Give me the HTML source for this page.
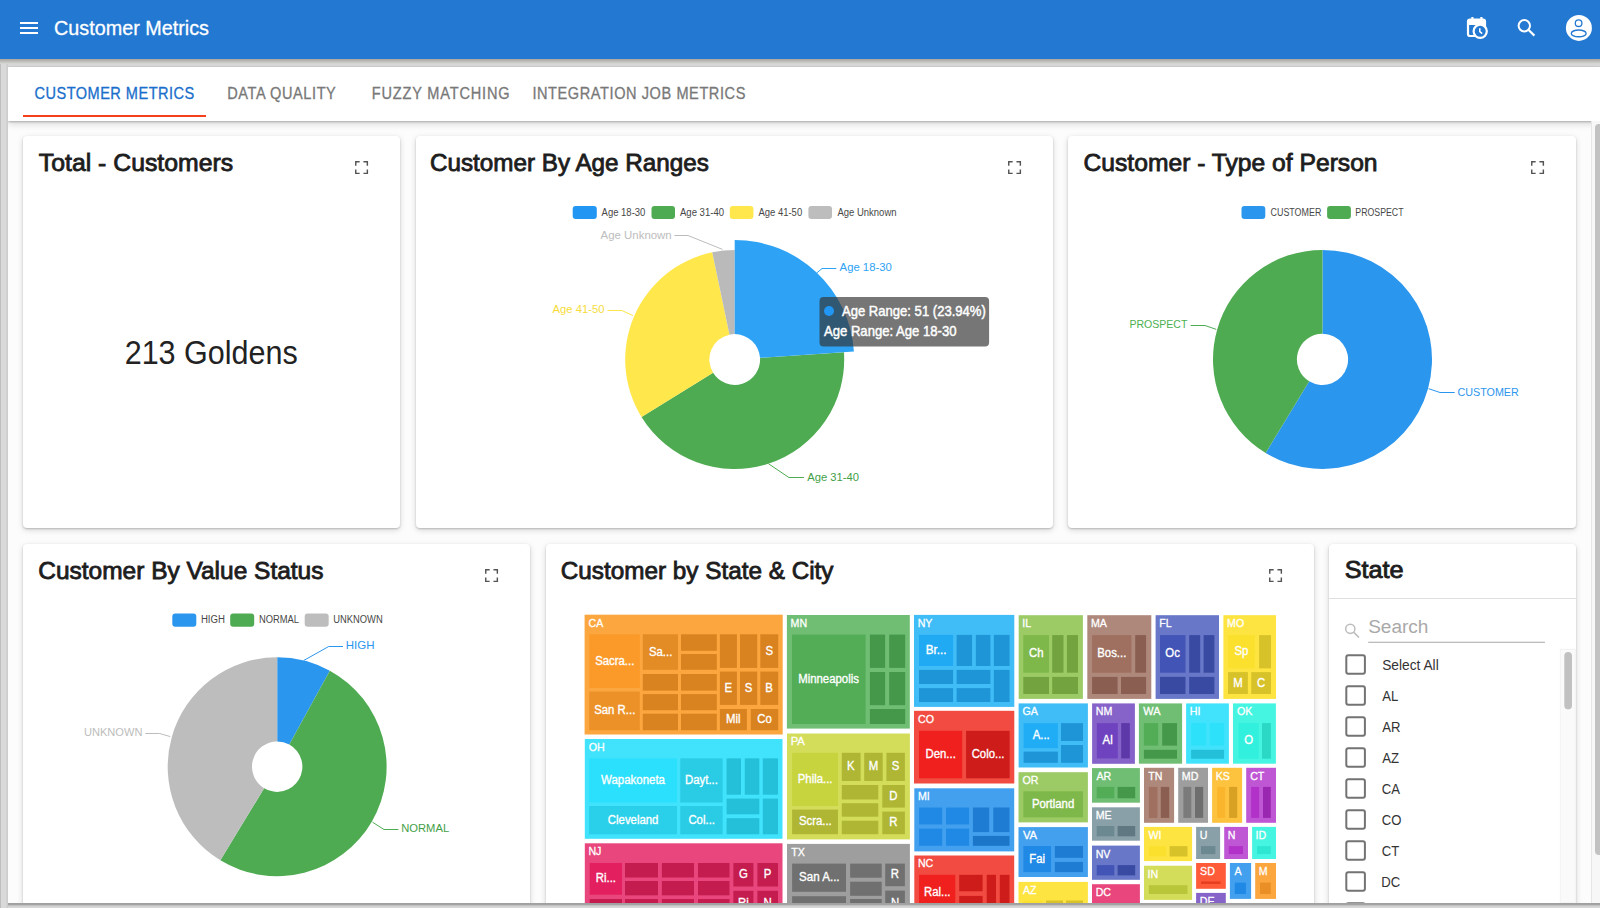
<!DOCTYPE html>
<html><head><meta charset="utf-8"><style>
html,body{margin:0;padding:0;width:1600px;height:908px;overflow:hidden;background:#d9d9d9;font-family:"Liberation Sans",sans-serif;position:relative}
.card{position:absolute;background:#fff;border-radius:4px;box-shadow:0 1px 2px rgba(0,0,0,.2),0 2px 6px rgba(0,0,0,.15)}
svg{position:absolute;left:0;top:0}
</style></head><body>
<div style="position:absolute;left:0;top:59px;width:1px;height:849px;background:#bfbfbf"></div>
<div style="position:absolute;left:0;top:0;width:1600px;height:59px;background:#2378d1;"></div>
<div style="position:absolute;left:0;top:59px;width:1600px;height:5px;background:linear-gradient(#a9a49c,#d9d9d9)"></div>
<div style="position:absolute;left:8px;top:67px;width:1600px;height:836px;background:#fcfcfc;box-shadow:-1px 1px 2px rgba(0,0,0,0.35)"></div>
<div style="position:absolute;left:8px;top:67px;width:1592px;height:54px;background:#fff;box-shadow:0 1px 2px rgba(0,0,0,0.25), 0 3px 7px rgba(0,0,0,0.14)"></div>
<div style="position:absolute;left:1591px;top:121px;width:9px;height:782px;background:#f7f7f7;border-left:1px solid #e6e6e6;box-sizing:border-box"></div>
<div style="position:absolute;left:1595px;top:124px;width:8px;height:731px;background:#c2c2c2;border-radius:4px"></div>
<div class="card" style="left:23px;top:136px;width:377px;height:392px"></div>
<div class="card" style="left:416px;top:136px;width:637px;height:392px"></div>
<div class="card" style="left:1068px;top:136px;width:508px;height:392px"></div>
<div class="card" style="left:546px;top:544px;width:768px;height:396px"></div>
<div class="card" style="left:23px;top:544px;width:507px;height:396px"></div>
<div class="card" style="left:1329px;top:544px;width:247px;height:396px"></div>
<svg width="1600" height="908" viewBox="0 0 1600 908" font-family="Liberation Sans, sans-serif">
<rect x="20.00" y="22.00" width="18.00" height="2.00" fill="#fff" />
<rect x="20.00" y="27.00" width="18.00" height="2.00" fill="#fff" />
<rect x="20.00" y="32.00" width="18.00" height="2.00" fill="#fff" />
<text x="54.00" y="35.00" font-size="20.93" fill="#fff" stroke="#fff" stroke-width="0.30" textLength="155.02" lengthAdjust="spacingAndGlyphs" >Customer Metrics</text>
<text transform="translate(35.25 98.60) scale(0.9200 1)" x="-0.80" y="0" font-size="15.84" fill="#196ecb" letter-spacing="0.516" stroke="#196ecb" stroke-width="0.30" >CUSTOMER METRICS</text>
<text transform="translate(228.40 98.60) scale(0.9200 1)" x="-1.30" y="0" font-size="15.84" fill="#787878" letter-spacing="0.635" stroke="#787878" stroke-width="0.30" >DATA QUALITY</text>
<text transform="translate(373.00 98.60) scale(0.9200 1)" x="-1.30" y="0" font-size="15.84" fill="#787878" letter-spacing="0.882" stroke="#787878" stroke-width="0.30" >FUZZY MATCHING</text>
<text transform="translate(533.75 98.60) scale(0.9200 1)" x="-1.46" y="0" font-size="15.84" fill="#787878" letter-spacing="0.624" stroke="#787878" stroke-width="0.30" >INTEGRATION JOB METRICS</text>
<rect x="23.00" y="115.00" width="183.00" height="2.00" fill="#f5401f" />
<path d="M1468 21.5 a2 2 0 0 1 2 -2 h13 a2 2 0 0 1 2 2 v8 M1476 36 h-6 a2 2 0 0 1 -2 -2 v-12.5" fill="none" stroke="#fff" stroke-width="2.2" />
<rect x="1468.00" y="20.00" width="17.00" height="5.00" fill="#fff" />
<rect x="1471.30" y="17.00" width="2.20" height="4.00" fill="#fff" />
<rect x="1480.30" y="17.00" width="2.20" height="4.00" fill="#fff" />
<circle cx="1480.2" cy="31.3" r="6.6" fill="#2378d1" stroke="#fff" stroke-width="2.2"/>
<path d="M1479.8 28.3 v3.4 l2.4 2.0" fill="none" stroke="#fff" stroke-width="1.5" />
<circle cx="1524.3" cy="25.7" r="5.7" fill="none" stroke="#fff" stroke-width="2"/>
<path d="M1528.4 29.8 L1534.4 35.6" fill="none" stroke="#fff" stroke-width="2.2" />
<circle cx="1578.9" cy="27.9" r="13" fill="#fff"/>
<circle cx="1578.6" cy="23.2" r="3.3" fill="#fff" stroke="#2378d1" stroke-width="1.3"/>
<ellipse cx="1578.7" cy="33.4" rx="7.4" ry="3.4" fill="#fff" stroke="#2378d1" stroke-width="1.4"/>
<text x="38.85" y="170.90" font-size="24.56" fill="#1d1d1d" stroke="#1d1d1d" stroke-width="0.85" textLength="194.23" lengthAdjust="spacingAndGlyphs" >Total - Customers</text>
<text x="429.97" y="171.00" font-size="24.56" fill="#1d1d1d" stroke="#1d1d1d" stroke-width="0.85" textLength="278.90" lengthAdjust="spacingAndGlyphs" >Customer By Age Ranges</text>
<text x="1083.56" y="171.00" font-size="24.56" fill="#1d1d1d" stroke="#1d1d1d" stroke-width="0.85" textLength="294.03" lengthAdjust="spacingAndGlyphs" >Customer - Type of Person</text>
<text x="38.27" y="579.10" font-size="24.56" fill="#1d1d1d" stroke="#1d1d1d" stroke-width="0.85" textLength="285.21" lengthAdjust="spacingAndGlyphs" >Customer By Value Status</text>
<text x="560.67" y="578.80" font-size="24.56" fill="#1d1d1d" stroke="#1d1d1d" stroke-width="0.85" textLength="272.88" lengthAdjust="spacingAndGlyphs" >Customer by State &amp; City</text>
<text x="1344.65" y="577.90" font-size="23.11" fill="#1d1d1d" stroke="#1d1d1d" stroke-width="0.85" textLength="58.97" lengthAdjust="spacingAndGlyphs" >State</text>
<path d="M355.75 165.65 V161.75 H359.65 M363.45 161.75 H367.35 V165.65 M367.35 169.45 V173.35 H363.45 M359.65 173.35 H355.75 V169.45" fill="none" stroke="#555" stroke-width="1.45" stroke-linecap="butt" stroke-linejoin="miter"/>
<path d="M1008.75 165.65 V161.75 H1012.65 M1016.45 161.75 H1020.35 V165.65 M1020.35 169.45 V173.35 H1016.45 M1012.65 173.35 H1008.75 V169.45" fill="none" stroke="#555" stroke-width="1.45" stroke-linecap="butt" stroke-linejoin="miter"/>
<path d="M1531.75 165.65 V161.75 H1535.65 M1539.45 161.75 H1543.35 V165.65 M1543.35 169.45 V173.35 H1539.45 M1535.65 173.35 H1531.75 V169.45" fill="none" stroke="#555" stroke-width="1.45" stroke-linecap="butt" stroke-linejoin="miter"/>
<path d="M485.75 573.65 V569.75 H489.65 M493.45 569.75 H497.35 V573.65 M497.35 577.45 V581.35 H493.45 M489.65 581.35 H485.75 V577.45" fill="none" stroke="#555" stroke-width="1.45" stroke-linecap="butt" stroke-linejoin="miter"/>
<path d="M1269.75 573.65 V569.75 H1273.65 M1277.45 569.75 H1281.35 V573.65 M1281.35 577.45 V581.35 H1277.45 M1273.65 581.35 H1269.75 V577.45" fill="none" stroke="#555" stroke-width="1.45" stroke-linecap="butt" stroke-linejoin="miter"/>
<text x="124.66" y="364.10" font-size="32.70" fill="#222" textLength="173.14" lengthAdjust="spacingAndGlyphs" >213 Goldens</text>
<rect x="572.70" y="206.00" width="24.10" height="13.00" rx="3" fill="#2196f3"/>
<text x="601.58" y="215.80" font-size="10.00" fill="#474747" textLength="43.79" lengthAdjust="spacingAndGlyphs" >Age 18-30</text>
<rect x="651.50" y="206.00" width="23.50" height="13.00" rx="3" fill="#4fab52"/>
<text x="679.98" y="215.80" font-size="10.00" fill="#474747" textLength="44.09" lengthAdjust="spacingAndGlyphs" >Age 31-40</text>
<rect x="729.80" y="206.00" width="23.60" height="13.00" rx="3" fill="#ffe74c"/>
<text x="758.48" y="215.80" font-size="10.00" fill="#474747" textLength="43.69" lengthAdjust="spacingAndGlyphs" >Age 41-50</text>
<rect x="808.40" y="206.00" width="23.60" height="13.00" rx="3" fill="#bdbdbd"/>
<text x="837.48" y="215.80" font-size="10.00" fill="#474747" textLength="59.03" lengthAdjust="spacingAndGlyphs" >Age Unknown</text>
<path d="M 843.96 352.24 A 109.50 109.50 0 0 1 641.53 417.02 L 713.09 372.84 A 25.40 25.40 0 0 0 760.04 357.82 Z" fill="#4fab52" stroke="none" stroke-width="1" />
<path d="M 641.53 417.02 A 109.50 109.50 0 0 1 712.25 252.33 L 729.49 334.64 A 25.40 25.40 0 0 0 713.09 372.84 Z" fill="#ffe74c" stroke="none" stroke-width="1" />
<path d="M 712.25 252.33 A 109.50 109.50 0 0 1 734.70 250.00 L 734.70 334.10 A 25.40 25.40 0 0 0 729.49 334.64 Z" fill="#bababa" stroke="none" stroke-width="1" />
<path d="M 734.70 240.00 A 119.50 119.50 0 0 1 853.94 351.57 L 760.04 357.82 A 25.40 25.40 0 0 0 734.70 334.10 Z" fill="#2ea3f5" stroke="none" stroke-width="1" />
<path d="M674.4 235.5 H688 L722.5 249.4" fill="none" stroke="#bdbdbd" stroke-width="1" />
<text x="600.58" y="238.75" font-size="11.77" fill="#bdbdbd" textLength="71.16" lengthAdjust="spacingAndGlyphs" >Age Unknown</text>
<path d="M607.5 310.5 H621.9 L633 315.6" fill="none" stroke="#fde74a" stroke-width="1" />
<text x="552.48" y="312.75" font-size="11.77" fill="#f6dc3a" textLength="51.96" lengthAdjust="spacingAndGlyphs" >Age 41-50</text>
<path d="M816.8 272.9 L822 268.5 H836.3" fill="none" stroke="#2ea3f5" stroke-width="1" />
<text x="839.58" y="271.40" font-size="11.77" fill="#2ea3f5" textLength="52.26" lengthAdjust="spacingAndGlyphs" >Age 18-30</text>
<path d="M768.3 463.6 L788.9 477.5 H803.9" fill="none" stroke="#4fab52" stroke-width="1" />
<text x="807.28" y="480.90" font-size="11.77" fill="#43a047" textLength="51.76" lengthAdjust="spacingAndGlyphs" >Age 31-40</text>
<rect x="819.5" y="296.9" width="169.6" height="49.6" rx="4" fill="rgba(50,50,50,0.67)"/>
<circle cx="829" cy="311" r="5" fill="#2196f3"/>
<text x="841.97" y="316.10" font-size="14.10" fill="#fff" stroke="#fff" stroke-width="0.45" textLength="143.84" lengthAdjust="spacingAndGlyphs" >Age Range: 51 (23.94%)</text>
<text x="823.97" y="336.00" font-size="14.10" fill="#fff" stroke="#fff" stroke-width="0.45" textLength="132.53" lengthAdjust="spacingAndGlyphs" >Age Range: Age 18-30</text>
<rect x="1241.50" y="206.00" width="23.80" height="13.00" rx="3" fill="#2b96ed"/>
<text x="1270.55" y="215.50" font-size="10.00" fill="#474747" textLength="50.76" lengthAdjust="spacingAndGlyphs" >CUSTOMER</text>
<rect x="1327.10" y="206.00" width="23.80" height="13.00" rx="3" fill="#4fab52"/>
<text x="1355.28" y="215.50" font-size="10.00" fill="#474747" textLength="48.32" lengthAdjust="spacingAndGlyphs" >PROSPECT</text>
<path d="M 1322.50 249.90 A 109.50 109.50 0 1 1 1265.67 453.00 L 1309.21 381.28 A 25.60 25.60 0 1 0 1322.50 333.80 Z" fill="#2b96ed" stroke="none" stroke-width="1" />
<path d="M 1265.67 453.00 A 109.50 109.50 0 0 1 1322.50 249.90 L 1322.50 333.80 A 25.60 25.60 0 0 0 1309.21 381.28 Z" fill="#4fab52" stroke="none" stroke-width="1" />
<path d="M1190.6 325.5 H1205 L1216.25 329.4" fill="none" stroke="#4fab52" stroke-width="1" />
<text x="1129.43" y="328.10" font-size="11.77" fill="#4caf50" textLength="58.01" lengthAdjust="spacingAndGlyphs" >PROSPECT</text>
<path d="M1428.6 388.7 L1440 392.5 H1454.7" fill="none" stroke="#2b96ed" stroke-width="1" />
<text x="1457.56" y="395.60" font-size="11.77" fill="#2b96ed" textLength="61.24" lengthAdjust="spacingAndGlyphs" >CUSTOMER</text>
<rect x="172.30" y="613.50" width="24.00" height="13.20" rx="3" fill="#2b96ed"/>
<text x="200.91" y="623.20" font-size="10.00" fill="#474747" textLength="24.08" lengthAdjust="spacingAndGlyphs" >HIGH</text>
<rect x="230.20" y="613.50" width="24.00" height="13.20" rx="3" fill="#4fab52"/>
<text x="258.93" y="623.20" font-size="10.00" fill="#474747" textLength="40.08" lengthAdjust="spacingAndGlyphs" >NORMAL</text>
<rect x="304.70" y="613.50" width="24.00" height="13.20" rx="3" fill="#bdbdbd"/>
<text x="333.18" y="623.20" font-size="10.00" fill="#474747" textLength="49.49" lengthAdjust="spacingAndGlyphs" >UNKNOWN</text>
<path d="M 277.20 657.20 A 109.50 109.50 0 0 1 329.84 670.68 L 289.31 744.60 A 25.20 25.20 0 0 0 277.20 741.50 Z" fill="#2b96ed" stroke="none" stroke-width="1" />
<path d="M 329.84 670.68 A 109.50 109.50 0 1 1 220.37 860.30 L 264.12 788.24 A 25.20 25.20 0 1 0 289.31 744.60 Z" fill="#4fab52" stroke="none" stroke-width="1" />
<path d="M 220.37 860.30 A 109.50 109.50 0 0 1 277.20 657.20 L 277.20 741.50 A 25.20 25.20 0 0 0 264.12 788.24 Z" fill="#bdbdbd" stroke="none" stroke-width="1" />
<path d="M303.7 660.5 L328.7 646.5 H343" fill="none" stroke="#2b96ed" stroke-width="1" />
<text x="345.76" y="648.70" font-size="11.77" fill="#2b96ed" textLength="28.78" lengthAdjust="spacingAndGlyphs" >HIGH</text>
<path d="M145.3 733.5 H159.7 L170.3 736.6" fill="none" stroke="#bdbdbd" stroke-width="1" />
<text x="83.95" y="735.60" font-size="11.77" fill="#bdbdbd" textLength="58.46" lengthAdjust="spacingAndGlyphs" >UNKNOWN</text>
<path d="M372.5 822.2 L384 829.5 H398.4" fill="none" stroke="#4fab52" stroke-width="1" />
<text x="401.28" y="831.60" font-size="11.77" fill="#43a047" textLength="47.84" lengthAdjust="spacingAndGlyphs" >NORMAL</text>
<svg x="0" y="0" width="1600" height="903" overflow="hidden"><g>
<rect x="584.60" y="614.70" width="198.10" height="119.80" fill="#fba63e" />
<rect x="589.20" y="634.30" width="50.60" height="53.70" fill="#fb9a29" />
<rect x="589.20" y="691.60" width="50.60" height="38.60" fill="#ec9127" />
<rect x="642.80" y="634.30" width="35.20" height="35.50" fill="#e38b24" />
<rect x="681.00" y="634.30" width="35.80" height="16.50" fill="#d98220" />
<rect x="681.00" y="654.00" width="35.80" height="15.80" fill="#d98220" />
<rect x="642.80" y="674.00" width="35.20" height="16.60" fill="#d98220" />
<rect x="681.00" y="674.00" width="35.80" height="16.60" fill="#d98220" />
<rect x="642.80" y="694.10" width="35.20" height="16.10" fill="#d98220" />
<rect x="681.00" y="694.10" width="35.80" height="16.10" fill="#d98220" />
<rect x="642.80" y="713.70" width="35.20" height="16.50" fill="#d98220" />
<rect x="681.00" y="713.70" width="35.80" height="16.50" fill="#d98220" />
<rect x="719.90" y="634.30" width="17.00" height="33.60" fill="#d98220" />
<rect x="740.00" y="634.30" width="17.20" height="33.60" fill="#d98220" />
<rect x="760.30" y="634.30" width="17.90" height="33.60" fill="#d98220" />
<rect x="719.90" y="671.60" width="17.00" height="33.30" fill="#d98220" />
<rect x="740.00" y="671.60" width="17.20" height="33.30" fill="#d98220" />
<rect x="760.30" y="671.60" width="17.90" height="33.30" fill="#d98220" />
<rect x="719.90" y="709.00" width="27.00" height="21.20" fill="#d98220" />
<rect x="750.80" y="709.00" width="27.40" height="21.20" fill="#d98220" />
<rect x="584.80" y="739.00" width="197.70" height="99.80" fill="#41e3fc" />
<rect x="589.10" y="758.40" width="87.90" height="44.10" fill="#2be0fc" />
<rect x="589.10" y="806.00" width="87.90" height="28.30" fill="#2ad0ea" />
<rect x="680.30" y="758.40" width="42.30" height="44.10" fill="#29cbe5" />
<rect x="680.30" y="806.00" width="42.30" height="28.30" fill="#29cbe5" />
<rect x="726.60" y="758.40" width="14.40" height="36.30" fill="#24bfd8" />
<rect x="744.80" y="758.40" width="14.50" height="36.30" fill="#24bfd8" />
<rect x="762.80" y="758.40" width="15.20" height="36.30" fill="#24bfd8" />
<rect x="726.60" y="798.60" width="32.70" height="15.70" fill="#24bfd8" />
<rect x="726.60" y="818.20" width="32.70" height="16.10" fill="#24bfd8" />
<rect x="762.80" y="798.60" width="15.20" height="35.70" fill="#24bfd8" />
<rect x="584.80" y="843.30" width="197.70" height="86.70" fill="#e8467c" />
<rect x="589.70" y="863.00" width="32.30" height="31.70" fill="#e31f5f" />
<rect x="589.70" y="899.00" width="32.30" height="31.00" fill="#c41c4e" />
<rect x="625.00" y="863.00" width="33.00" height="14.50" fill="#c41c4e" />
<rect x="661.90" y="863.00" width="32.10" height="14.50" fill="#c41c4e" />
<rect x="698.00" y="863.00" width="31.50" height="14.50" fill="#c41c4e" />
<rect x="625.00" y="881.00" width="33.00" height="14.30" fill="#c41c4e" />
<rect x="661.90" y="881.00" width="32.10" height="14.30" fill="#c41c4e" />
<rect x="698.00" y="881.00" width="31.50" height="14.30" fill="#c41c4e" />
<rect x="625.00" y="899.00" width="33.00" height="31.00" fill="#c41c4e" />
<rect x="661.90" y="899.00" width="32.10" height="31.00" fill="#c41c4e" />
<rect x="698.00" y="899.00" width="31.50" height="31.00" fill="#c41c4e" />
<rect x="733.40" y="863.00" width="20.00" height="23.50" fill="#c41c4e" />
<rect x="757.40" y="863.00" width="20.60" height="23.50" fill="#c41c4e" />
<rect x="733.40" y="890.80" width="20.00" height="25.20" fill="#c41c4e" />
<rect x="757.40" y="890.80" width="20.60" height="25.20" fill="#c41c4e" />
<rect x="786.90" y="615.00" width="122.90" height="113.60" fill="#6fbe74" />
<rect x="792.00" y="634.60" width="73.60" height="89.40" fill="#52ad56" />
<rect x="869.90" y="634.60" width="15.20" height="33.30" fill="#45974a" />
<rect x="889.20" y="634.60" width="16.00" height="33.30" fill="#45974a" />
<rect x="869.90" y="672.00" width="15.20" height="33.20" fill="#45974a" />
<rect x="889.20" y="672.00" width="16.00" height="33.20" fill="#45974a" />
<rect x="869.90" y="709.00" width="35.30" height="15.00" fill="#45974a" />
<rect x="787.00" y="733.50" width="122.90" height="105.90" fill="#d4dd5a" />
<rect x="792.10" y="752.80" width="45.90" height="53.20" fill="#c8d43d" />
<rect x="792.10" y="809.60" width="45.90" height="24.60" fill="#aeb634" />
<rect x="841.80" y="752.80" width="18.80" height="28.20" fill="#aeb634" />
<rect x="864.20" y="752.80" width="18.50" height="28.20" fill="#aeb634" />
<rect x="886.40" y="752.80" width="18.50" height="28.20" fill="#aeb634" />
<rect x="841.80" y="785.00" width="36.50" height="14.50" fill="#aeb634" />
<rect x="841.80" y="803.20" width="36.50" height="13.50" fill="#aeb634" />
<rect x="841.80" y="820.70" width="36.50" height="13.50" fill="#aeb634" />
<rect x="882.30" y="785.00" width="22.60" height="22.60" fill="#aeb634" />
<rect x="882.30" y="811.60" width="22.60" height="22.60" fill="#aeb634" />
<rect x="787.00" y="843.90" width="122.90" height="86.10" fill="#9e9e9e" />
<rect x="792.10" y="863.60" width="53.90" height="28.20" fill="#707070" />
<rect x="792.10" y="896.20" width="53.90" height="33.80" fill="#707070" />
<rect x="850.10" y="863.60" width="31.60" height="14.10" fill="#707070" />
<rect x="850.10" y="881.70" width="31.60" height="14.10" fill="#707070" />
<rect x="850.10" y="899.00" width="31.60" height="31.00" fill="#707070" />
<rect x="885.20" y="863.60" width="19.70" height="22.60" fill="#707070" />
<rect x="885.20" y="890.60" width="19.70" height="25.40" fill="#707070" />
<rect x="914.00" y="614.90" width="100.30" height="92.00" fill="#40bdf7" />
<rect x="919.00" y="634.90" width="34.10" height="31.10" fill="#20aaf3" />
<rect x="956.60" y="634.90" width="15.50" height="31.10" fill="#1e95d6" />
<rect x="975.80" y="634.90" width="14.60" height="31.10" fill="#1e95d6" />
<rect x="993.80" y="634.90" width="15.80" height="31.10" fill="#1e95d6" />
<rect x="919.00" y="669.90" width="34.10" height="14.10" fill="#1e95d6" />
<rect x="956.60" y="669.90" width="33.80" height="14.10" fill="#1e95d6" />
<rect x="919.00" y="688.10" width="34.10" height="13.90" fill="#1e95d6" />
<rect x="956.60" y="688.10" width="33.80" height="13.90" fill="#1e95d6" />
<rect x="993.80" y="669.90" width="15.80" height="32.10" fill="#1e95d6" />
<rect x="914.00" y="710.80" width="100.30" height="72.70" fill="#f24c42" />
<rect x="919.00" y="730.80" width="43.20" height="47.50" fill="#ef201e" />
<rect x="966.10" y="730.80" width="43.50" height="47.50" fill="#cd1c19" />
<rect x="914.30" y="788.30" width="99.90" height="63.10" fill="#42a0ee" />
<rect x="919.10" y="807.50" width="23.10" height="17.00" fill="#2089e6" />
<rect x="946.00" y="807.50" width="23.10" height="17.00" fill="#2089e6" />
<rect x="919.10" y="828.60" width="23.10" height="17.20" fill="#2089e6" />
<rect x="946.00" y="828.60" width="23.10" height="17.20" fill="#2089e6" />
<rect x="972.90" y="807.50" width="16.30" height="24.60" fill="#1e7cd2" />
<rect x="993.30" y="807.50" width="16.20" height="24.60" fill="#1e7cd2" />
<rect x="972.90" y="835.90" width="36.60" height="9.90" fill="#1b75c8" />
<rect x="914.30" y="855.50" width="99.90" height="74.50" fill="#f24c42" />
<rect x="919.10" y="874.80" width="36.20" height="36.20" fill="#ef201e" />
<rect x="959.20" y="874.80" width="23.40" height="16.50" fill="#cd1c19" />
<rect x="959.20" y="895.90" width="23.40" height="34.10" fill="#cd1c19" />
<rect x="986.70" y="874.80" width="9.30" height="55.20" fill="#cd1c19" />
<rect x="999.80" y="874.80" width="9.70" height="55.20" fill="#cd1c19" />
<rect x="1018.70" y="615.20" width="64.20" height="83.70" fill="#9ccb66" />
<rect x="1023.30" y="635.10" width="25.70" height="37.60" fill="#7fb84a" />
<rect x="1052.20" y="635.10" width="11.30" height="37.60" fill="#72a33e" />
<rect x="1066.90" y="635.10" width="11.10" height="37.60" fill="#72a33e" />
<rect x="1023.30" y="676.90" width="25.70" height="17.10" fill="#72a33e" />
<rect x="1052.20" y="676.90" width="25.80" height="17.10" fill="#72a33e" />
<rect x="1087.30" y="615.20" width="64.00" height="83.70" fill="#ae887b" />
<rect x="1092.10" y="635.10" width="39.30" height="37.60" fill="#9f705f" />
<rect x="1135.20" y="635.10" width="10.90" height="37.60" fill="#8a5f52" />
<rect x="1092.10" y="676.90" width="25.50" height="17.10" fill="#8a5f52" />
<rect x="1121.00" y="676.90" width="25.10" height="17.10" fill="#8a5f52" />
<rect x="1155.60" y="615.20" width="63.40" height="83.70" fill="#6877c7" />
<rect x="1160.00" y="635.10" width="25.50" height="37.60" fill="#4254b6" />
<rect x="1189.20" y="635.10" width="11.00" height="37.60" fill="#394aa3" />
<rect x="1203.60" y="635.10" width="10.80" height="37.60" fill="#394aa3" />
<rect x="1160.00" y="676.90" width="25.50" height="17.10" fill="#394aa3" />
<rect x="1189.20" y="676.90" width="25.20" height="17.10" fill="#394aa3" />
<rect x="1223.40" y="615.20" width="52.60" height="83.70" fill="#fee440" />
<rect x="1228.00" y="635.10" width="26.90" height="33.30" fill="#fbe12e" />
<rect x="1259.10" y="635.10" width="11.90" height="33.30" fill="#d8c22a" />
<rect x="1228.00" y="672.10" width="19.90" height="21.90" fill="#d8c22a" />
<rect x="1251.20" y="672.10" width="19.80" height="21.90" fill="#d8c22a" />
<rect x="1018.60" y="703.40" width="69.30" height="64.10" fill="#40bdf7" />
<rect x="1023.60" y="723.10" width="34.30" height="25.10" fill="#20adf5" />
<rect x="1023.60" y="751.60" width="34.30" height="11.20" fill="#1e95d6" />
<rect x="1061.00" y="723.10" width="22.00" height="17.90" fill="#1e95d6" />
<rect x="1061.00" y="745.00" width="22.00" height="17.80" fill="#1e95d6" />
<rect x="1092.10" y="703.40" width="42.80" height="60.40" fill="#8663c9" />
<rect x="1096.80" y="723.10" width="21.00" height="35.30" fill="#6f43bf" />
<rect x="1121.20" y="723.10" width="8.60" height="35.30" fill="#5d38a8" />
<rect x="1138.90" y="703.40" width="43.20" height="60.30" fill="#6fbe74" />
<rect x="1143.90" y="723.10" width="14.30" height="22.50" fill="#52ad56" />
<rect x="1162.20" y="723.10" width="14.80" height="22.50" fill="#45974a" />
<rect x="1143.90" y="749.80" width="33.10" height="8.90" fill="#45974a" />
<rect x="1186.10" y="703.40" width="42.80" height="60.30" fill="#41e3fc" />
<rect x="1191.10" y="723.10" width="15.00" height="22.50" fill="#2ee1fb" />
<rect x="1209.70" y="723.10" width="14.40" height="22.50" fill="#2ee1fb" />
<rect x="1191.10" y="749.80" width="33.00" height="8.90" fill="#24bfd8" />
<rect x="1233.00" y="703.40" width="42.90" height="60.30" fill="#45f5e2" />
<rect x="1238.60" y="723.10" width="20.10" height="35.60" fill="#31f0dd" />
<rect x="1262.00" y="723.10" width="8.90" height="35.60" fill="#2bd8c6" />
<rect x="1018.50" y="772.20" width="69.40" height="50.20" fill="#9ccb66" />
<rect x="1023.40" y="791.30" width="59.60" height="26.10" fill="#7fb84a" />
<rect x="1018.50" y="827.10" width="69.40" height="49.90" fill="#42a0ee" />
<rect x="1023.40" y="846.00" width="27.70" height="26.10" fill="#2089e6" />
<rect x="1054.80" y="846.00" width="28.20" height="11.80" fill="#1e7cd2" />
<rect x="1054.80" y="861.90" width="28.20" height="10.20" fill="#1e7cd2" />
<rect x="1018.50" y="881.90" width="69.40" height="48.10" fill="#fee440" />
<rect x="1023.40" y="900.50" width="19.60" height="29.50" fill="#fbe12e" />
<rect x="1046.00" y="900.50" width="17.00" height="29.50" fill="#d8c22a" />
<rect x="1066.00" y="900.50" width="17.00" height="29.50" fill="#d8c22a" />
<rect x="1092.00" y="768.10" width="47.90" height="34.60" fill="#6fbe74" />
<rect x="1096.70" y="786.90" width="17.60" height="11.40" fill="#52ad56" />
<rect x="1117.60" y="786.90" width="17.60" height="11.40" fill="#45974a" />
<rect x="1092.00" y="807.30" width="47.90" height="33.40" fill="#8aa0a9" />
<rect x="1096.70" y="826.00" width="17.60" height="10.30" fill="#6c8891" />
<rect x="1117.60" y="826.00" width="17.60" height="10.30" fill="#5f7882" />
<rect x="1092.00" y="845.60" width="47.90" height="34.20" fill="#6877c7" />
<rect x="1096.70" y="865.10" width="17.60" height="10.30" fill="#4254b6" />
<rect x="1117.60" y="865.10" width="17.60" height="10.30" fill="#394aa3" />
<rect x="1092.00" y="884.20" width="47.90" height="45.80" fill="#e8467c" />
<rect x="1144.00" y="767.80" width="30.10" height="55.00" fill="#ae887b" />
<rect x="1148.90" y="786.90" width="8.60" height="31.00" fill="#9f705f" />
<rect x="1160.80" y="786.90" width="8.40" height="31.00" fill="#8a5f52" />
<rect x="1178.20" y="767.80" width="29.80" height="55.00" fill="#9e9e9e" />
<rect x="1183.40" y="786.90" width="7.90" height="31.00" fill="#7b7b7b" />
<rect x="1195.00" y="786.90" width="8.20" height="31.00" fill="#6e6e6e" />
<rect x="1212.10" y="767.80" width="30.00" height="55.00" fill="#fdc33f" />
<rect x="1217.30" y="786.90" width="7.90" height="31.00" fill="#fbb52c" />
<rect x="1229.10" y="786.90" width="8.10" height="31.00" fill="#d9a124" />
<rect x="1246.20" y="767.80" width="29.80" height="55.00" fill="#bf57d5" />
<rect x="1251.10" y="786.90" width="8.10" height="31.00" fill="#b232c9" />
<rect x="1263.00" y="786.90" width="7.80" height="31.00" fill="#9a27b0" />
<rect x="1144.00" y="826.90" width="48.10" height="34.20" fill="#fee440" />
<rect x="1148.90" y="846.10" width="17.10" height="10.40" fill="#fbe12e" />
<rect x="1169.60" y="846.10" width="17.90" height="10.40" fill="#d8c22a" />
<rect x="1196.10" y="826.90" width="24.00" height="32.10" fill="#8aa0a9" />
<rect x="1201.00" y="846.10" width="14.40" height="8.00" fill="#6c8891" />
<rect x="1224.20" y="826.90" width="23.80" height="32.10" fill="#bf57d5" />
<rect x="1228.80" y="846.10" width="14.20" height="8.00" fill="#b232c9" />
<rect x="1252.10" y="826.90" width="23.90" height="32.10" fill="#45f5e2" />
<rect x="1257.00" y="846.10" width="13.80" height="8.00" fill="#2ee7d2" />
<rect x="1144.00" y="865.70" width="48.10" height="34.20" fill="#d4dd5a" />
<rect x="1148.90" y="885.20" width="38.60" height="8.80" fill="#b9c63a" />
<rect x="1196.10" y="863.00" width="29.70" height="25.80" fill="#ff5b39" />
<rect x="1201.00" y="881.50" width="19.60" height="2.40" fill="#e63c1f" />
<rect x="1229.90" y="863.00" width="21.20" height="35.90" fill="#42a0ee" />
<rect x="1234.80" y="882.60" width="11.10" height="11.40" fill="#2089e6" />
<rect x="1255.20" y="863.00" width="20.80" height="35.90" fill="#fba63e" />
<rect x="1260.00" y="882.60" width="10.80" height="11.40" fill="#e98f26" />
<rect x="1196.10" y="892.90" width="29.70" height="37.10" fill="#8663c9" />
<text x="588.56" y="626.60" font-size="11.20" fill="#fff" stroke="#fff" stroke-width="0.30" textLength="14.78" lengthAdjust="spacingAndGlyphs" >CA</text>
<text x="595.16" y="664.65" font-size="12.50" fill="#fff" stroke="#fff" stroke-width="0.35" textLength="39.20" lengthAdjust="spacingAndGlyphs" >Sacra...</text>
<text x="594.21" y="714.40" font-size="12.50" fill="#fff" stroke="#fff" stroke-width="0.35" textLength="41.10" lengthAdjust="spacingAndGlyphs" >San R...</text>
<text x="648.96" y="655.55" font-size="12.50" fill="#fff" stroke="#fff" stroke-width="0.35" textLength="23.39" lengthAdjust="spacingAndGlyphs" >Sa...</text>
<text x="765.46" y="654.60" font-size="12.50" fill="#fff" stroke="#fff" stroke-width="0.35" textLength="7.59" lengthAdjust="spacingAndGlyphs" >S</text>
<text x="724.38" y="691.75" font-size="12.50" fill="#fff" stroke="#fff" stroke-width="0.35" textLength="7.59" lengthAdjust="spacingAndGlyphs" >E</text>
<text x="744.81" y="691.75" font-size="12.50" fill="#fff" stroke="#fff" stroke-width="0.35" textLength="7.59" lengthAdjust="spacingAndGlyphs" >S</text>
<text x="765.29" y="691.75" font-size="12.50" fill="#fff" stroke="#fff" stroke-width="0.35" textLength="7.59" lengthAdjust="spacingAndGlyphs" >B</text>
<text x="726.05" y="723.10" font-size="12.50" fill="#fff" stroke="#fff" stroke-width="0.35" textLength="14.53" lengthAdjust="spacingAndGlyphs" >Mil</text>
<text x="757.18" y="723.10" font-size="12.50" fill="#fff" stroke="#fff" stroke-width="0.35" textLength="14.54" lengthAdjust="spacingAndGlyphs" >Co</text>
<text x="588.80" y="750.90" font-size="11.20" fill="#fff" stroke="#fff" stroke-width="0.30" textLength="15.96" lengthAdjust="spacingAndGlyphs" >OH</text>
<text x="601.09" y="783.95" font-size="12.50" fill="#fff" stroke="#fff" stroke-width="0.35" textLength="63.87" lengthAdjust="spacingAndGlyphs" >Wapakoneta</text>
<text x="607.83" y="823.65" font-size="12.50" fill="#fff" stroke="#fff" stroke-width="0.35" textLength="50.59" lengthAdjust="spacingAndGlyphs" >Cleveland</text>
<text x="685.07" y="783.95" font-size="12.50" fill="#fff" stroke="#fff" stroke-width="0.35" textLength="32.87" lengthAdjust="spacingAndGlyphs" >Dayt...</text>
<text x="688.41" y="823.65" font-size="12.50" fill="#fff" stroke="#fff" stroke-width="0.35" textLength="26.55" lengthAdjust="spacingAndGlyphs" >Col...</text>
<text x="588.43" y="855.20" font-size="11.20" fill="#fff" stroke="#fff" stroke-width="0.30" textLength="13.00" lengthAdjust="spacingAndGlyphs" >NJ</text>
<text x="595.79" y="882.35" font-size="12.50" fill="#fff" stroke="#fff" stroke-width="0.35" textLength="20.22" lengthAdjust="spacingAndGlyphs" >Ri...</text>
<text x="739.11" y="878.25" font-size="12.50" fill="#fff" stroke="#fff" stroke-width="0.35" textLength="8.85" lengthAdjust="spacingAndGlyphs" >G</text>
<text x="763.74" y="878.25" font-size="12.50" fill="#fff" stroke="#fff" stroke-width="0.35" textLength="7.59" lengthAdjust="spacingAndGlyphs" >P</text>
<text x="737.95" y="906.90" font-size="12.50" fill="#fff" stroke="#fff" stroke-width="0.35" textLength="10.74" lengthAdjust="spacingAndGlyphs" >Ri</text>
<text x="763.59" y="906.90" font-size="12.50" fill="#fff" stroke="#fff" stroke-width="0.35" textLength="8.21" lengthAdjust="spacingAndGlyphs" >N</text>
<text x="790.53" y="626.90" font-size="11.20" fill="#fff" stroke="#fff" stroke-width="0.30" textLength="16.55" lengthAdjust="spacingAndGlyphs" >MN</text>
<text x="798.19" y="682.80" font-size="12.50" fill="#fff" stroke="#fff" stroke-width="0.35" textLength="60.70" lengthAdjust="spacingAndGlyphs" >Minneapolis</text>
<text x="790.63" y="745.40" font-size="11.20" fill="#fff" stroke="#fff" stroke-width="0.30" textLength="14.19" lengthAdjust="spacingAndGlyphs" >PA</text>
<text x="797.72" y="782.90" font-size="12.50" fill="#fff" stroke="#fff" stroke-width="0.35" textLength="34.77" lengthAdjust="spacingAndGlyphs" >Phila...</text>
<text x="798.88" y="825.40" font-size="12.50" fill="#fff" stroke="#fff" stroke-width="0.35" textLength="32.87" lengthAdjust="spacingAndGlyphs" >Scra...</text>
<text x="847.00" y="770.40" font-size="12.50" fill="#fff" stroke="#fff" stroke-width="0.35" textLength="7.59" lengthAdjust="spacingAndGlyphs" >K</text>
<text x="868.71" y="770.40" font-size="12.50" fill="#fff" stroke="#fff" stroke-width="0.35" textLength="9.48" lengthAdjust="spacingAndGlyphs" >M</text>
<text x="891.86" y="770.40" font-size="12.50" fill="#fff" stroke="#fff" stroke-width="0.35" textLength="7.59" lengthAdjust="spacingAndGlyphs" >S</text>
<text x="889.30" y="799.80" font-size="12.50" fill="#fff" stroke="#fff" stroke-width="0.35" textLength="8.21" lengthAdjust="spacingAndGlyphs" >D</text>
<text x="889.29" y="826.40" font-size="12.50" fill="#fff" stroke="#fff" stroke-width="0.35" textLength="8.21" lengthAdjust="spacingAndGlyphs" >R</text>
<text x="791.26" y="855.80" font-size="11.20" fill="#fff" stroke="#fff" stroke-width="0.30" textLength="13.60" lengthAdjust="spacingAndGlyphs" >TX</text>
<text x="799.08" y="881.20" font-size="12.50" fill="#fff" stroke="#fff" stroke-width="0.35" textLength="40.47" lengthAdjust="spacingAndGlyphs" >San A...</text>
<text x="890.74" y="878.40" font-size="12.50" fill="#fff" stroke="#fff" stroke-width="0.35" textLength="8.21" lengthAdjust="spacingAndGlyphs" >R</text>
<text x="890.94" y="906.80" font-size="12.50" fill="#fff" stroke="#fff" stroke-width="0.35" textLength="8.21" lengthAdjust="spacingAndGlyphs" >N</text>
<text x="917.63" y="626.80" font-size="11.20" fill="#fff" stroke="#fff" stroke-width="0.30" textLength="14.78" lengthAdjust="spacingAndGlyphs" >NY</text>
<text x="925.67" y="653.95" font-size="12.50" fill="#fff" stroke="#fff" stroke-width="0.35" textLength="20.86" lengthAdjust="spacingAndGlyphs" >Br...</text>
<text x="917.96" y="722.70" font-size="11.20" fill="#fff" stroke="#fff" stroke-width="0.30" textLength="15.96" lengthAdjust="spacingAndGlyphs" >CO</text>
<text x="925.48" y="758.05" font-size="12.50" fill="#fff" stroke="#fff" stroke-width="0.35" textLength="30.35" lengthAdjust="spacingAndGlyphs" >Den...</text>
<text x="971.64" y="758.05" font-size="12.50" fill="#fff" stroke="#fff" stroke-width="0.35" textLength="32.88" lengthAdjust="spacingAndGlyphs" >Colo...</text>
<text x="917.93" y="800.20" font-size="11.20" fill="#fff" stroke="#fff" stroke-width="0.30" textLength="11.82" lengthAdjust="spacingAndGlyphs" >MI</text>
<text x="917.93" y="867.40" font-size="11.20" fill="#fff" stroke="#fff" stroke-width="0.30" textLength="15.37" lengthAdjust="spacingAndGlyphs" >NC</text>
<text x="923.98" y="896.40" font-size="12.50" fill="#fff" stroke="#fff" stroke-width="0.35" textLength="26.55" lengthAdjust="spacingAndGlyphs" >Ral...</text>
<text x="1022.22" y="627.10" font-size="11.20" fill="#fff" stroke="#fff" stroke-width="0.30" textLength="8.87" lengthAdjust="spacingAndGlyphs" >IL</text>
<text x="1028.96" y="657.40" font-size="12.50" fill="#fff" stroke="#fff" stroke-width="0.35" textLength="14.54" lengthAdjust="spacingAndGlyphs" >Ch</text>
<text x="1090.93" y="627.10" font-size="11.20" fill="#fff" stroke="#fff" stroke-width="0.30" textLength="15.96" lengthAdjust="spacingAndGlyphs" >MA</text>
<text x="1097.26" y="657.40" font-size="12.50" fill="#fff" stroke="#fff" stroke-width="0.35" textLength="29.08" lengthAdjust="spacingAndGlyphs" >Bos...</text>
<text x="1159.23" y="627.10" font-size="11.20" fill="#fff" stroke="#fff" stroke-width="0.30" textLength="12.42" lengthAdjust="spacingAndGlyphs" >FL</text>
<text x="1165.36" y="657.40" font-size="12.50" fill="#fff" stroke="#fff" stroke-width="0.35" textLength="14.54" lengthAdjust="spacingAndGlyphs" >Oc</text>
<text x="1227.03" y="627.10" font-size="11.20" fill="#fff" stroke="#fff" stroke-width="0.30" textLength="17.14" lengthAdjust="spacingAndGlyphs" >MO</text>
<text x="1234.47" y="655.25" font-size="12.50" fill="#fff" stroke="#fff" stroke-width="0.35" textLength="13.91" lengthAdjust="spacingAndGlyphs" >Sp</text>
<text x="1233.21" y="686.55" font-size="12.50" fill="#fff" stroke="#fff" stroke-width="0.35" textLength="9.48" lengthAdjust="spacingAndGlyphs" >M</text>
<text x="1256.92" y="686.55" font-size="12.50" fill="#fff" stroke="#fff" stroke-width="0.35" textLength="8.21" lengthAdjust="spacingAndGlyphs" >C</text>
<text x="1022.56" y="715.30" font-size="11.20" fill="#fff" stroke="#fff" stroke-width="0.30" textLength="15.37" lengthAdjust="spacingAndGlyphs" >GA</text>
<text x="1032.72" y="739.15" font-size="12.50" fill="#fff" stroke="#fff" stroke-width="0.35" textLength="17.07" lengthAdjust="spacingAndGlyphs" >A...</text>
<text x="1095.73" y="715.30" font-size="11.20" fill="#fff" stroke="#fff" stroke-width="0.30" textLength="16.55" lengthAdjust="spacingAndGlyphs" >NM</text>
<text x="1102.61" y="744.25" font-size="12.50" fill="#fff" stroke="#fff" stroke-width="0.35" textLength="10.11" lengthAdjust="spacingAndGlyphs" >Al</text>
<text x="1143.35" y="715.30" font-size="11.20" fill="#fff" stroke="#fff" stroke-width="0.30" textLength="17.14" lengthAdjust="spacingAndGlyphs" >WA</text>
<text x="1189.73" y="715.30" font-size="11.20" fill="#fff" stroke="#fff" stroke-width="0.30" textLength="10.64" lengthAdjust="spacingAndGlyphs" >HI</text>
<text x="1237.00" y="715.30" font-size="11.20" fill="#fff" stroke="#fff" stroke-width="0.30" textLength="15.37" lengthAdjust="spacingAndGlyphs" >OK</text>
<text x="1244.23" y="744.40" font-size="12.50" fill="#fff" stroke="#fff" stroke-width="0.35" textLength="8.85" lengthAdjust="spacingAndGlyphs" >O</text>
<text x="1022.50" y="784.10" font-size="11.20" fill="#fff" stroke="#fff" stroke-width="0.30" textLength="15.96" lengthAdjust="spacingAndGlyphs" >OR</text>
<text x="1031.92" y="807.85" font-size="12.50" fill="#fff" stroke="#fff" stroke-width="0.35" textLength="42.37" lengthAdjust="spacingAndGlyphs" >Portland</text>
<text x="1022.95" y="839.00" font-size="11.20" fill="#fff" stroke="#fff" stroke-width="0.30" textLength="14.19" lengthAdjust="spacingAndGlyphs" >VA</text>
<text x="1029.27" y="862.55" font-size="12.50" fill="#fff" stroke="#fff" stroke-width="0.35" textLength="15.80" lengthAdjust="spacingAndGlyphs" >Fai</text>
<text x="1022.98" y="893.80" font-size="11.20" fill="#fff" stroke="#fff" stroke-width="0.30" textLength="13.60" lengthAdjust="spacingAndGlyphs" >AZ</text>
<text x="1096.48" y="780.00" font-size="11.20" fill="#fff" stroke="#fff" stroke-width="0.30" textLength="14.78" lengthAdjust="spacingAndGlyphs" >AR</text>
<text x="1095.63" y="819.20" font-size="11.20" fill="#fff" stroke="#fff" stroke-width="0.30" textLength="15.96" lengthAdjust="spacingAndGlyphs" >ME</text>
<text x="1095.63" y="857.50" font-size="11.20" fill="#fff" stroke="#fff" stroke-width="0.30" textLength="14.78" lengthAdjust="spacingAndGlyphs" >NV</text>
<text x="1095.63" y="896.10" font-size="11.20" fill="#fff" stroke="#fff" stroke-width="0.30" textLength="15.37" lengthAdjust="spacingAndGlyphs" >DC</text>
<text x="1148.26" y="779.70" font-size="11.20" fill="#fff" stroke="#fff" stroke-width="0.30" textLength="14.18" lengthAdjust="spacingAndGlyphs" >TN</text>
<text x="1181.83" y="779.70" font-size="11.20" fill="#fff" stroke="#fff" stroke-width="0.30" textLength="16.55" lengthAdjust="spacingAndGlyphs" >MD</text>
<text x="1215.73" y="779.70" font-size="11.20" fill="#fff" stroke="#fff" stroke-width="0.30" textLength="14.19" lengthAdjust="spacingAndGlyphs" >KS</text>
<text x="1250.16" y="779.70" font-size="11.20" fill="#fff" stroke="#fff" stroke-width="0.30" textLength="14.18" lengthAdjust="spacingAndGlyphs" >CT</text>
<text x="1148.45" y="838.80" font-size="11.20" fill="#fff" stroke="#fff" stroke-width="0.30" textLength="13.00" lengthAdjust="spacingAndGlyphs" >WI</text>
<text x="1199.78" y="838.80" font-size="11.20" fill="#fff" stroke="#fff" stroke-width="0.30" textLength="7.68" lengthAdjust="spacingAndGlyphs" >U</text>
<text x="1227.83" y="838.80" font-size="11.20" fill="#fff" stroke="#fff" stroke-width="0.30" textLength="7.68" lengthAdjust="spacingAndGlyphs" >N</text>
<text x="1255.62" y="838.80" font-size="11.20" fill="#fff" stroke="#fff" stroke-width="0.30" textLength="10.64" lengthAdjust="spacingAndGlyphs" >ID</text>
<text x="1147.52" y="877.60" font-size="11.20" fill="#fff" stroke="#fff" stroke-width="0.30" textLength="10.64" lengthAdjust="spacingAndGlyphs" >IN</text>
<text x="1200.12" y="874.90" font-size="11.20" fill="#fff" stroke="#fff" stroke-width="0.30" textLength="14.78" lengthAdjust="spacingAndGlyphs" >SD</text>
<text x="1234.38" y="874.90" font-size="11.20" fill="#fff" stroke="#fff" stroke-width="0.30" textLength="7.10" lengthAdjust="spacingAndGlyphs" >A</text>
<text x="1258.83" y="874.90" font-size="11.20" fill="#fff" stroke="#fff" stroke-width="0.30" textLength="8.86" lengthAdjust="spacingAndGlyphs" >M</text>
<text x="1199.73" y="904.80" font-size="11.20" fill="#fff" stroke="#fff" stroke-width="0.30" textLength="14.78" lengthAdjust="spacingAndGlyphs" >DE</text>
</g></svg>
<rect x="1329.00" y="598.00" width="247.00" height="1.00" fill="#e0e0e0" />
<circle cx="1350.3" cy="628.8" r="4.6" fill="none" stroke="#bdbdbd" stroke-width="1.5"/>
<path d="M1353.6 632.1 L1359 637.5" fill="none" stroke="#bdbdbd" stroke-width="1.6" />
<text x="1368.14" y="632.50" font-size="19.19" fill="#a9a9a9" textLength="60.30" lengthAdjust="spacingAndGlyphs" >Search</text>
<rect x="1368.20" y="641.70" width="176.70" height="1.20" fill="#b5b5b5" />
<rect x="1560.20" y="649.20" width="15.00" height="253.80" fill="#fafafa" stroke="#ececec" stroke-width="0.6"/>
<rect x="1564.3" y="651.9" width="7.7" height="57.5" rx="3.85" fill="#c1c1c1"/>
<rect x="1346.30" y="655.20" width="18.6" height="18.6" rx="2" fill="none" stroke="#737373" stroke-width="2"/>
<text x="1382.18" y="669.50" font-size="14.10" fill="#333" textLength="56.52" lengthAdjust="spacingAndGlyphs" >Select All</text>
<rect x="1346.30" y="686.20" width="18.6" height="18.6" rx="2" fill="none" stroke="#737373" stroke-width="2"/>
<text x="1382.37" y="700.50" font-size="14.10" fill="#333" textLength="16.04" lengthAdjust="spacingAndGlyphs" >AL</text>
<rect x="1346.30" y="717.20" width="18.6" height="18.6" rx="2" fill="none" stroke="#737373" stroke-width="2"/>
<text x="1382.37" y="731.50" font-size="14.10" fill="#333" textLength="18.22" lengthAdjust="spacingAndGlyphs" >AR</text>
<rect x="1346.30" y="748.20" width="18.6" height="18.6" rx="2" fill="none" stroke="#737373" stroke-width="2"/>
<text x="1382.37" y="762.50" font-size="14.10" fill="#333" textLength="16.76" lengthAdjust="spacingAndGlyphs" >AZ</text>
<rect x="1346.30" y="779.20" width="18.6" height="18.6" rx="2" fill="none" stroke="#737373" stroke-width="2"/>
<text x="1381.73" y="793.50" font-size="14.10" fill="#333" textLength="18.22" lengthAdjust="spacingAndGlyphs" >CA</text>
<rect x="1346.30" y="810.20" width="18.6" height="18.6" rx="2" fill="none" stroke="#737373" stroke-width="2"/>
<text x="1381.73" y="824.50" font-size="14.10" fill="#333" textLength="19.67" lengthAdjust="spacingAndGlyphs" >CO</text>
<rect x="1346.30" y="841.20" width="18.6" height="18.6" rx="2" fill="none" stroke="#737373" stroke-width="2"/>
<text x="1381.73" y="855.50" font-size="14.10" fill="#333" textLength="17.48" lengthAdjust="spacingAndGlyphs" >CT</text>
<rect x="1346.30" y="872.20" width="18.6" height="18.6" rx="2" fill="none" stroke="#737373" stroke-width="2"/>
<text x="1381.32" y="886.50" font-size="14.10" fill="#333" textLength="18.94" lengthAdjust="spacingAndGlyphs" >DC</text>
<rect x="1346.30" y="903.20" width="18.6" height="18.6" rx="2" fill="none" stroke="#737373" stroke-width="2"/>
</svg>
<div style="position:absolute;left:0;top:903px;width:1600px;height:5px;background:linear-gradient(#9f9f9f,#a3a3a3 30%,#d0d0d0 60%,#d9d9d9)"></div>
<div style="position:absolute;left:0;top:64px;width:8px;height:844px;background:linear-gradient(90deg,#bebebe 0,#bebebe 1px,#d9d9d9 1.5px,#d9d9d9 5.5px,#c9c9c9 8px)"></div>
</body></html>
